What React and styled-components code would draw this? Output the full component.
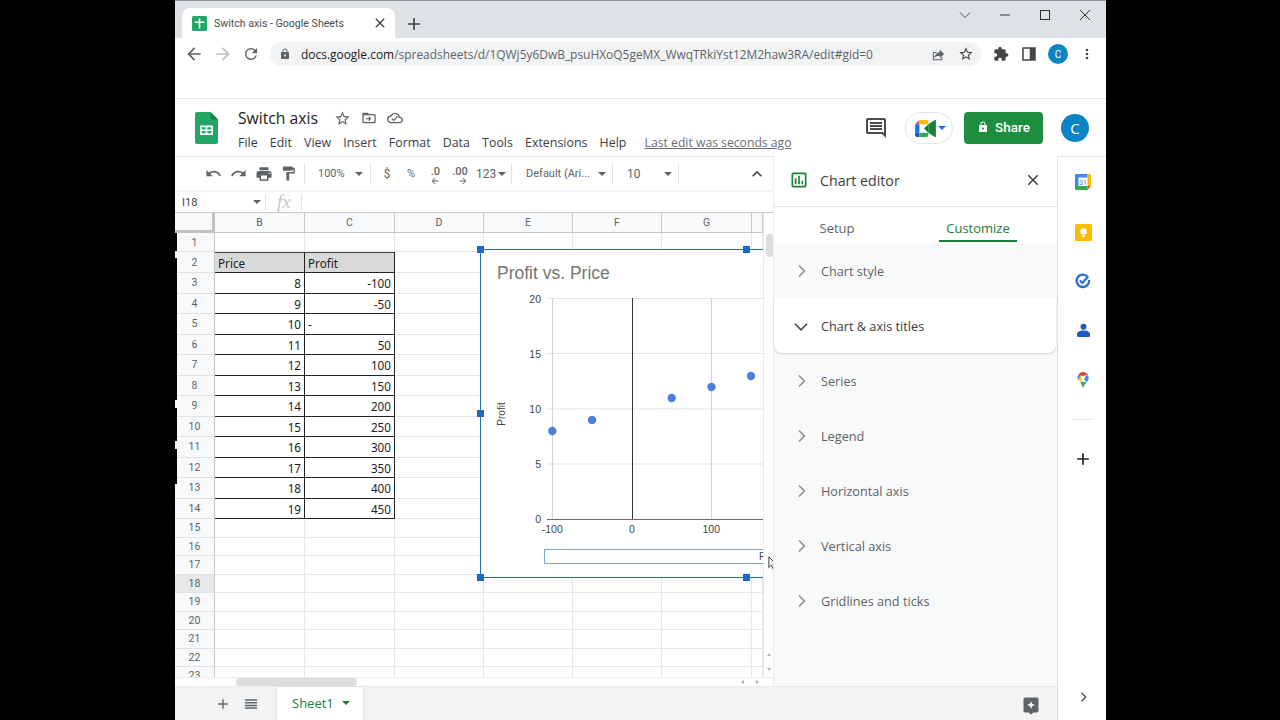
import React from 'react';
import styled, { createGlobalStyle } from 'styled-components';

const Global = createGlobalStyle`
  html, body { margin: 0; padding: 0; background: #000; }
  * { box-sizing: border-box; }
  #root { width: 1280px; height: 720px; overflow: hidden; }
`;

const Window = styled.div`
  position: relative; width: 931px; height: 720px; margin-left: 175px;
  background: #fff; display: flex; flex-direction: column;
  font-family: Roboto, "Noto Sans", sans-serif; overflow: hidden;
`;
const Glyph = styled.svg`
  display: block; flex: none; width: ${p => p.$w || p.$s || 24}px; height: ${p => p.$h || p.$s || 24}px;
  fill: ${p => p.$c || '#5f6368'};
`;
const Icon = ({ d, s, c }) => <Glyph viewBox="0 0 24 24" $s={s} $c={c}><path d={d} /></Glyph>;
const Caret = styled.span`
  display: block; flex: none; width: 0; height: 0; margin-left: ${p => p.$ml || 0}px;
  border-left: 4px solid transparent; border-right: 4px solid transparent;
  border-top: 4px solid ${p => p.$c || '#5f6368'};
`;

/* browser chrome */
const TabStrip = styled.div`
  height: 38px; flex: none; background: #dee1e6; border-top: 1px solid #8f9296;
  padding: 7px 0 0 7px; display: flex; align-items: stretch;
`;
const Tab = styled.div`
  width: 213px; background: #fff; border-radius: 8px 8px 0 0; display: flex; align-items: center;
  padding: 0 7px 0 10px; gap: 7px;
`;
const TabTitle = styled.span`
  flex: 1; font: 400 10.6px Roboto, sans-serif; color: #4a4d51; white-space: nowrap;
`;
const NewTab = styled.div`margin: 1px 0 0 9px; align-self: center;`;
const WinControls = styled.div`
  margin: -7px 0 0 auto; height: 28px; display: flex; align-items: center; gap: 26px; padding-right: 14px;
`;
const UrlRow = styled.div`height: 32px; flex: none; display: flex; align-items: center; padding-left: 9px;`;
const NavButtons = styled.div`display: flex; gap: 9px; align-items: center; margin-right: 10px;`;
const Omnibox = styled.div`
  width: 711px; height: 24px; border-radius: 12px; background: #f1f3f4; display: flex; align-items: center;
  padding: 0 7px 0 9px;
`;
const Url = styled.span`
  flex: 1; margin-left: 10px; font: 11.95px "Open Sans", sans-serif; color: #5f6368; white-space: nowrap;
  & b { font-weight: 400; color: #202124; }
`;
const OmniIcons = styled.div`display: flex; gap: 12px; align-items: center;`;
const ChromeTools = styled.div`display: flex; align-items: center; gap: 10.5px; margin-left: 12px;`;
const SmallAvatar = styled.div`
  width: 20px; height: 20px; border-radius: 50%; background: #0b84c6; color: #fff; font-size: 10px;
  display: flex; align-items: center; justify-content: center;
`;
const Bookmarks = styled.div`height: 29px; flex: none; border-bottom: 1px solid #e4e5e6;`;

/* docs header */
const DocsHeader = styled.header`
  height: 58px; flex: none; border-bottom: 1px solid #e0e2e4; display: flex; padding: 13px 17px 0 20px;
`;
const TitleCol = styled.div`margin: -7px 0 0 20px;`;
const TitleRow = styled.div`height: 26px; display: flex; align-items: center;`;
const DocTitle = styled.span`font: 400 15.7px "Open Sans", sans-serif; color: #202124; margin-right: 16px;`;
const TitleIcons = styled.div`display: flex; gap: 10px; align-items: center;`;
const Menu = styled.nav`display: flex; align-items: center; height: 22px; gap: 12.2px; margin-top: 0;`;
const MenuItem = styled.span`font: 400 12.4px "Open Sans", sans-serif; color: #3c4043; white-space: nowrap;`;
const LastEdit = styled.span`
  font: 400 12.2px "Open Sans", sans-serif; color: #6b6f73; text-decoration: underline; margin-left: 6px; white-space: nowrap;
`;
const HeaderRight = styled.div`margin-left: auto; display: flex; align-items: center; height: 32px;`;
const MeetPill = styled.div`
  width: 48px; height: 32px; margin: 0 11px 0 17px; border: 1px solid #e3e5e7; border-radius: 16px;
  display: flex; align-items: center; padding-left: 9px; gap: 2px;
`;
const ShareButton = styled.div`
  width: 79px; height: 32px; border-radius: 4px; background: #1e8e3e; color: #fff; display: flex; align-items: center;
  justify-content: center; gap: 6px; font: 500 13.5px Roboto, sans-serif; padding-bottom: 2px;
`;
const Avatar = styled.div`
  width: 28px; height: 28px; margin-left: 18px; border-radius: 50%; background: #0b84c6; color: #fff;
  font: 400 15px "Open Sans", sans-serif; display: flex; align-items: center; justify-content: center;
`;

/* body */
const Body = styled.div`flex: 1; min-height: 0; display: flex;`;
const Workspace = styled.div`width: 882px; display: flex; flex-direction: column;`;
const Upper = styled.div`flex: 1; min-height: 0; display: flex;`;
const Sheet = styled.div`width: 598px; display: flex; flex-direction: column; min-height: 0;`;
const Toolbar = styled.div`
  height: 33px; flex: none; display: flex; align-items: center; padding-left: 26px; position: relative;
`;
const Slot = styled.div`
  width: ${p => p.$w}px; flex: none; display: flex; align-items: center; justify-content: ${p => p.$j || 'center'};
  padding-left: ${p => p.$pl || 0}px;
  font: 400 ${p => p.$f || 11}px Roboto, sans-serif; color: #5f6368;
`;
const Sep = styled.div`flex: none; width: 1px; height: 20px; background: #e0e2e4; margin-left: ${p => p.$l || 0}px;`;
const Decimal = styled.div`
  display: flex; flex-direction: column; align-items: flex-end; font: 500 11px/9px Roboto, sans-serif; color: #5f6368; margin-top: 5px;
`;
const ToolbarGap = styled.div`height: 2px; flex: none; background: #f1f3f4;`;
const FormulaBar = styled.div`
  height: 20px; flex: none; display: flex; align-items: center; background: #fff; padding-left: 7px;
`;
const CellName = styled.div`width: 84px; display: flex; align-items: center; justify-content: space-between; padding-right: 4px;
  font: 400 11px Roboto, sans-serif; color: #3c4043; border-right: 1px solid #e0e2e4; height: 16px; margin-right: 10px;`;
const Fx = styled.span`font: italic 400 19px "Liberation Serif", serif; color: #c4c7c9; width: 26px; border-right: 1px solid #e0e2e4; height: 16px; line-height: 15px; padding-left: 1px;`;
const GridArea = styled.div`flex: 1; min-height: 0; display: flex; position: relative; border-top: 1px solid #c7c9cb;`;
const GridClip = styled.div`width: 588px; position: relative; overflow: hidden;`;
const Row = styled.div`display: flex; height: ${p => p.$h}px;`;
const Corner = styled.div`width: 40px; flex: none; background: #f8f9fa; border-right: 3px solid #c0c2c4; border-bottom: 3px solid #c0c2c4;`;
const ColHead = styled.div`
  width: ${p => p.$w}px; flex: none; background: #f8f9fa; border-right: 1px solid #c8cacc; border-bottom: 1px solid #c4c6c8;
  display: flex; align-items: center; justify-content: center; font: 400 10.5px Roboto, sans-serif; color: #5f6368;
`;
const RowHead = styled.div`
  width: 40px; flex: none; background: ${p => p.$sel ? '#e6e8ea' : '#f8f9fa'}; border-right: 1px solid #c4c6c8; border-bottom: 1px solid #e0e2e4;
  display: flex; align-items: center; justify-content: center; font: 400 10.5px Roboto, sans-serif; color: #5f6368;
`;
const Cell = styled.div`
  width: ${p => p.$w}px; flex: none; display: flex; align-items: center; padding: 1px 3px 0;
  justify-content: ${p => p.$right ? 'flex-end' : 'flex-start'};
  background: ${p => p.$head ? '#d9d9d9' : '#fff'};
  font: 400 11.7px "Noto Sans", sans-serif; color: #1c1c1c;
  border-right: 1px solid ${p => p.$table ? '#222' : '#e6e8e8'};
  border-bottom: 1px solid ${p => p.$table ? '#222' : '#e6e8e8'};
`;
const HeadTopCell = styled(Cell)`border-top: 1px solid #444;`;
const EdgeMark = styled.div`
  position: absolute; left: 0; width: 2px; top: ${p => p.$t}px; height: ${p => p.$h}px; background: #000;
`;
const Chart = styled.div`
  position: absolute; left: 305px; top: 35.5px; width: 320px; height: 329.5px; background: #fff; border: 1.5px solid #2a6cbc;
`;
const ChartSvg = styled.svg`display: block; position: absolute; left: -1px; top: -1px; width: 283px; height: 329px;`;
const Handle = styled.span`
  position: absolute; width: 7px; height: 7px; background: #1c68c9; left: ${p => p.$x}px; top: ${p => p.$y}px;
`;
const VScroll = styled.div`
  width: 10px; flex: none; border-left: 1px solid #e8eaeb; background: #fff; display: flex; flex-direction: column; align-items: center;
  padding: 21px 0 4px;
`;
const Thumb = styled.div`width: 8px; height: 23px; border-radius: 4px; background: #dadcde; margin-left: 2px;`;
const ScrollArrow = styled.div`
  width: 0; height: 0; margin-top: ${p => p.$m || 0}px; border-left: 2.5px solid transparent; border-right: 2.5px solid transparent;
  ${p => p.$up ? 'border-bottom: 3px solid #b0b3b6;' : 'border-top: 3px solid #b0b3b6;'}
`;
const Cursor = styled.svg`position: absolute; left: 593px; top: 343px; width: 10px; height: 14px;`;
const HScroll = styled.div`
  height: 9px; flex: none; background: #fff; border-top: 1px solid #ebedee; display: flex; align-items: center; padding-left: 61px; position: relative;
`;
const HThumb = styled.div`width: 121px; height: 8px; border-radius: 4px; background: #dadcde;`;
const HArrows = styled.div`margin-left: auto; margin-right: 14px; display: flex; gap: 12px; align-items: center;`;
const HArrow = styled.div`
  width: 0; height: 0; border-top: 2.5px solid transparent; border-bottom: 2.5px solid transparent;
  ${p => p.$left ? 'border-right: 3px solid #a8abae;' : 'border-left: 3px solid #a8abae;'}
`;

/* editor */
const Editor = styled.aside`
  width: 284px; flex: none; display: flex; flex-direction: column; background: #f8fafa;
  border-left: 1px solid #eceeef; position: relative; margin-top: -1px;
`;
const EditorHead = styled.div`
  height: 51px; flex: none; background: #fff; border-bottom: 1px solid #e3e5e6; display: flex; align-items: center; padding: 0 15px 2px 15px;
`;
const EditorTitle = styled.span`flex: 1; margin-left: 11px; font: 400 14.2px "Open Sans", sans-serif; color: #3c4043;`;
const Tabs = styled.div`height: 37px; flex: none; background: #fff; display: flex; padding-left: 45px; position: relative;`;
const EditorTab = styled.div`
  font: 500 13px "Open Sans", sans-serif; color: ${p => p.$on ? '#1e7e3e' : '#5f6368'}; height: 35px;
  display: flex; align-items: center; justify-content: center; white-space: nowrap;
  width: ${p => p.$w}px; margin-left: ${p => p.$m || 0}px; border-bottom: 2px solid ${p => p.$on ? '#188038' : 'transparent'};
  padding-top: 9px;
`;
const Accordion = styled.div`flex: 1; min-height: 0; display: flex; flex-direction: column;`;
const Item = styled.div`
  height: ${p => p.$h}px; flex: none; display: flex; align-items: center; padding-left: ${p => p.$open ? 17 : 18}px; gap: ${p => p.$open ? 10 : 11}px;
  background: ${p => p.$open ? '#fff' : 'transparent'}; color: ${p => p.$open ? '#3c4043' : '#5f6368'};
  font: 500 12.7px "Open Sans", sans-serif;
  ${p => p.$open && 'border-radius: 0 0 8px 8px; box-shadow: 0 1px 2px rgba(60,64,67,.22); margin-right: 1px; position: relative;'}
`;

/* sheet tabs */
const SheetBar = styled.div`
  height: 34px; flex: none; background: #f1f3f4; display: flex; align-items: stretch; padding-right: 16px; border-top: 1px solid #e9ebec;
`;
const BarIcons = styled.div`display: flex; align-items: center; padding-left: 40px; gap: 12px; width: 102px;`;
const SheetTab = styled.div`
  width: 86px; background: #fff; display: flex; align-items: center; padding: 0 0 2px 15px; gap: 8px;
  font: 500 13px "Open Sans", sans-serif; color: #188038; box-shadow: 0 0 2px rgba(60,64,67,.25);
`;
const Explore = styled.div`margin-left: auto; align-self: center; margin-top: 2px;`;

/* side panel */
const SidePanel = styled.div`
  width: 49px; flex: none; border-left: 1px solid #e0e2e4; display: flex; flex-direction: column; align-items: center; padding: 17px 0 0 2px; position: relative;
`;
const SideSlot = styled.div`height: 49.6px; flex: none; display: flex; justify-content: center;`;
const SideRule = styled.div`width: 20px; height: 1px; background: #e0e2e4; margin: -3px 0 29px;`;
const SideChevron = styled.div`margin-top: auto; margin-bottom: 16px;`;

const P = {
  back: 'M20 11H7.83l5.59-5.59L12 4l-8 8 8 8 1.41-1.41L7.83 13H20v-2z',
  reload: 'M17.65 6.35A7.96 7.96 0 0 0 12 4a8 8 0 1 0 7.73 10h-2.08A6 6 0 1 1 12 6c1.66 0 3.14.69 4.22 1.78L13 11h7V4l-2.35 2.35z',
  forward: 'M12 4l-1.41 1.41L16.17 11H4v2h12.17l-5.58 5.59L12 20l8-8z',
  close: 'M19 6.41L17.59 5 12 10.59 6.41 5 5 6.41 10.59 12 5 17.59 6.41 19 12 13.41 17.59 19 19 17.59 13.41 12z',
  plus: 'M19 13h-6v6h-2v-6H5v-2h6V5h2v6h6v2z',
  lock: 'M18 8h-1V6c0-2.76-2.24-5-5-5S7 3.24 7 6v2H6c-1.1 0-2 .9-2 2v10c0 1.1.9 2 2 2h12c1.1 0 2-.9 2-2V10c0-1.1-.9-2-2-2zm-6 9c-1.1 0-2-.9-2-2s.9-2 2-2 2 .9 2 2-.9 2-2 2zm3.1-9H8.9V6c0-1.71 1.39-3.1 3.1-3.1 1.71 0 3.1 1.39 3.1 3.1v2z',
  star: 'M22 9.24l-7.19-.62L12 2 9.19 8.63 2 9.24l5.46 4.73L5.82 21 12 17.27 18.18 21l-1.63-7.03L22 9.24zM12 15.4l-3.76 2.27 1-4.28-3.32-2.88 4.38-.38L12 6.1l1.71 4.04 4.38.38-3.32 2.88 1 4.28L12 15.4z',
  ext: 'M20.5 11H19V7c0-1.1-.9-2-2-2h-4V3.5C13 2.12 11.88 1 10.5 1S8 2.12 8 3.5V5H4c-1.1 0-1.99.9-1.99 2v3.8H3.5c1.49 0 2.7 1.21 2.7 2.7s-1.21 2.7-2.7 2.7H2V20c0 1.1.9 2 2 2h3.8v-1.5c0-1.49 1.21-2.7 2.7-2.7 1.49 0 2.7 1.21 2.7 2.7V22H17c1.1 0 2-.9 2-2v-4h1.5c1.38 0 2.5-1.12 2.5-2.5S21.88 11 20.5 11z',
  panel: 'M3 3h18v18H3V3zm2 2v14h8V5H5z',
  dots: 'M12 8a2 2 0 1 0 0-4 2 2 0 0 0 0 4zm0 2a2 2 0 1 0 0 4 2 2 0 0 0 0-4zm0 6a2 2 0 1 0 0 4 2 2 0 0 0 0-4z',
  share: 'M14 8V4l7 7-7 7v-4.1c-3.9 0-6.8 1.2-9 4.1.7-4.4 3.2-8.6 9-10zM3 8h6v1.6H4.6v9.8h12V16H18v5H3V8z',
  undo: 'M12.5 8c-2.65 0-5.05.99-6.9 2.6L2 7v9h9l-3.62-3.62c1.39-1.16 3.16-1.88 5.12-1.88 3.54 0 6.55 2.31 7.6 5.5l2.37-.78C21.08 11.03 17.15 8 12.5 8z',
  redo: 'M18.4 10.6C16.55 8.99 14.15 8 11.5 8c-4.65 0-8.58 3.03-9.96 7.22L3.9 16c1.05-3.19 4.05-5.5 7.6-5.5 1.95 0 3.73.72 5.12 1.88L13 16h9V7l-3.6 3.6z',
  print: 'M19 8H5c-1.66 0-3 1.34-3 3v6h4v4h12v-4h4v-6c0-1.66-1.34-3-3-3zm-3 11H8v-5h8v5zm3-7c-.55 0-1-.45-1-1s.45-1 1-1 1 .45 1 1-.45 1-1 1zm-1-9H6v4h12V3z',
  paint: 'M18 4V3c0-.55-.45-1-1-1H5c-.55 0-1 .45-1 1v4c0 .55.45 1 1 1h12c.55 0 1-.45 1-1V6h1v4H9v11c0 .55.45 1 1 1h2c.55 0 1-.45 1-1v-9h8V4h-3z',
  comment: 'M20 4v13.17L18.83 16H4V4h16m0-2H4c-1.1 0-2 .9-2 2v12c0 1.1.9 2 2 2h14l4 4V4c0-1.1-.9-2-2-2zm-2 10H6v2h12v-2zm0-3H6v2h12V9zm0-3H6v2h12V6z',
  folder: 'M20 6h-8l-2-2H4c-1.1 0-2 .9-2 2v12c0 1.1.9 2 2 2h16c1.1 0 2-.9 2-2V8c0-1.1-.9-2-2-2zm0 12H4V8h16v10zM12 9.5l-1.1 1.1 1.6 1.6H7v1.6h5.5l-1.6 1.6L12 16.5l3.5-3.5z',
  cloud: 'M19.35 10.04A7.49 7.49 0 0 0 12 4a7.48 7.48 0 0 0-6.65 4.04A5.99 5.99 0 0 0 0 14c0 3.31 2.69 6 6 6h13c2.76 0 5-2.24 5-5 0-2.64-2.05-4.78-4.65-4.96zM19 18H6c-2.21 0-4-1.79-4-4 0-2.05 1.53-3.76 3.56-3.97l1.07-.11.5-.95A5.47 5.47 0 0 1 12 6c2.62 0 4.88 1.86 5.39 4.43l.3 1.5 1.53.11A2.98 2.98 0 0 1 22 15c0 1.65-1.35 3-3 3zm-9-1l-3.5-3.5 1.4-1.4 2.1 2.1 5.2-5.2 1.4 1.4z',
  chevUp: 'M12 8l-6 6 1.41 1.41L12 10.83l4.59 4.58L18 14z',
  chevRight: 'M8.59 5.41L15.17 12l-6.58 6.59L10 20l8-8-8-8z',
  chevDown: 'M5.41 8.59L12 15.17l6.59-6.58L20 10l-8 8-8-8z',
  lines: 'M3 5h18v2.2H3zm0 4h18v2.2H3zm0 4h18v2.2H3zm0 4h18v2.2H3z',
  chart: 'M19 3H5c-1.1 0-2 .9-2 2v14c0 1.1.9 2 2 2h14c1.1 0 2-.9 2-2V5c0-1.1-.9-2-2-2zm0 16H5V5h14v14zM7 10h2v7H7zm4-3h2v10h-2zm4 6h2v4h-2z',
  explore: 'M19 3H5c-1.1 0-2 .9-2 2v14c0 1.1.9 2 2 2h4l3 2.5 3-2.5h4c1.1 0 2-.9 2-2V5c0-1.1-.9-2-2-2zm-7 4.2l1.4 3.4 3.4 1.4-3.4 1.4-1.4 3.4-1.4-3.4L7.2 12l3.4-1.4z',
};

const Favicon = () => (
  <Glyph viewBox="0 0 15 15" $s={15} $c="#23a566">
    <rect width="15" height="15" rx="1.5" />
    <path fill="#fff" d="M6.700 2.500h1.600v3h4v1.600h-4v5.400H6.700V7.100h-4V5.500h4z" />
  </Glyph>
);
const SheetsLogo = () => (
  <Glyph viewBox="0 0 23 32" $w={23} $h={32}>
    <path fill="#23a566" d="M2 0h13.5L23 7.5V30a2 2 0 0 1-2 2H2a2 2 0 0 1-2-2V2a2 2 0 0 1 2-2z" />
    <path fill="#188038" d="M15.5 0v6a1.5 1.5 0 0 0 1.5 1.5h6z" />
    <path fill="#fff" d="M5 13.5h13V23H5zm1.7 1.7v2.2h4v-2.2zm5.6 0v2.2h4v-2.2zm-5.6 3.8v2.3h4V19zm5.6 0v2.3h4V19z" />
  </Glyph>
);
const MeetLogo = () => (
  <Glyph viewBox="0 0 22 18" $w={21} $h={17}>
    <path fill="#ea4335" d="M4.5 0 0 4.5h4.5z" />
    <path fill="#fbbc04" d="M4.5 0H12a2 2 0 0 1 2 2v2.5H4.5z" />
    <path fill="#1a73e8" d="M0 4.5h4.5v9H0z" />
    <path fill="#0f5fc7" d="M0 13.5h4.5V18H2a2 2 0 0 1-2-2z" />
    <path fill="#34a853" d="M4.5 13.5H14V16a2 2 0 0 1-2 2H4.5z" />
    <path fill="#188038" d="M14 4.5 21 0h1v18h-1l-7-4.5z" />
    <path fill="#00832d" d="M14 4.5V13.5L9.5 9z" />
  </Glyph>
);
const CalendarLogo = () => (
  <Glyph viewBox="0 0 16 16" $s={16} $c="#fff">
    <rect width="16" height="16" fill="#fff" />
    <path fill="#4285f4" d="M1 0h11v3.5H3.5V12H0V1a1 1 0 0 1 1-1z" />
    <path fill="#fbbc04" d="M12 0h3a1 1 0 0 1 1 1v11h-3.5V3.5H12z" />
    <path fill="#34a853" d="M0 12h12.5v4H1a1 1 0 0 1-1-1z" />
    <path fill="#ea4335" d="M12.5 12H16l-3.5 4z" />
    <text x="8" y="10.5" fontSize="7" fill="#4285f4" textAnchor="middle" fontFamily="Roboto">31</text>
  </Glyph>
);
const KeepLogo = () => (
  <Glyph viewBox="0 0 17 17" $s={17} $c="#fbbc04">
    <rect width="17" height="17" rx="1.5" />
    <circle cx="8.5" cy="7.5" r="3.3" fill="#fff" />
    <rect x="6.8" y="11.5" width="3.4" height="1.5" fill="#fff" />
  </Glyph>
);
const TasksLogo = () => (
  <Glyph viewBox="0 0 16 16" $s={16} $c="none">
    <path d="M12.6 3.8A6.2 6.2 0 1 0 14 7" stroke="#2a6fd6" strokeWidth="2.3" fill="none" />
    <path d="M4.8 7.5 7.3 10l6-6.5" stroke="#2a6fd6" strokeWidth="2.2" fill="none" />
  </Glyph>
);
const ContactsLogo = () => (
  <Glyph viewBox="0 0 14 16" $w={13} $h={15} $c="#1a5cc4">
    <circle cx="7" cy="4" r="3.2" />
    <path d="M0 12c0-2.6 3-3.9 7-3.9s7 1.3 7 3.9v1.4c0 1-.7 1.6-1.6 1.6H1.6C.7 15 0 14.4 0 13.4z" />
  </Glyph>
);
const MapsLogo = () => (
  <Glyph viewBox="0 0 12 17" $w={12} $h={16}>
    <path fill="#34a853" d="M3 10l3 7c1-2.6 2.4-4.3 3.8-6z" />
    <path fill="#fbbc04" d="M.7 8.2 3 10l3-3.7L3.3 4z" />
    <path fill="#4285f4" d="M6 6.3 9.8 11C11 9.5 12 8 12 6c0-1-.3-2-.8-2.8z" />
    <path fill="#ea4335" d="M6 0C4 0 2.4 1 1.4 2.3L3.3 4 6 4.2l5.2-1C10.200 1.200 8.300 0 6 0z" />
    <path fill="#4285f4" d="M1.400 2.300A6 6 0 0 0 .7 8.200L3.300 4z" />
    <circle cx="6" cy="6" r="2" fill="#fff" />
  </Glyph>
);

const columns = [90, 90, 89, 89, 89, 90, 11];
const letters = ['B', 'C', 'D', 'E', 'F', 'G', ''];
const tableRows = [
  [8, -100], [9, -50], [10, '-'], [11, 50], [12, 100], [13, 150],
  [14, 200], [15, 250], [16, 300], [17, 350], [18, 400], [19, 450],
];
const emptyRows = [15, 16, 17, 18, 19, 20, 21, 22, 23];
const BlankCells = ({ from }) => columns.slice(from).map((w, i) => <Cell key={i} $w={w} />);
const accordion = ['Chart style', 'Chart & axis titles', 'Series', 'Legend', 'Horizontal axis', 'Vertical axis', 'Gridlines and ticks'];
const menu = ['File', 'Edit', 'View', 'Insert', 'Format', 'Data', 'Tools', 'Extensions', 'Help'];

const gridY = [298.5, 353.5, 409, 464, 519];
const gridX = [552.3, 632, 711.3];
const dots = [[552.3, 431], [592, 420], [671.7, 398], [711.5, 387], [751, 376]];

const ChartDrawing = () => (
  <ChartSvg viewBox="480 249 283 329" fontFamily="'Liberation Sans', sans-serif">
    <text x="497" y="279" fontSize="17.5" fill="#757575">Profit vs. Price</text>
    {gridY.slice(0, 4).map(y => <line key={y} x1="547" x2="763" y1={y} y2={y} stroke="#e2e2e2" strokeWidth="1.2" />)}
    {[552.5, 711.5].map(x => <line key={x} x1={x} x2={x} y1="298" y2="519" stroke="#d2d2d2" />)}
    <line x1="632.5" x2="632.5" y1="298" y2="519" stroke="#333" />
    <line x1="547" x2="763" y1="519.500" y2="519.500" stroke="#6a6a6a" strokeWidth="1.2" />
    {[20, 15, 10, 5, 0].map((v, i) => <text key={v} x="541" y={gridY[i] + 4} fontSize="10.5" fill="#444" textAnchor="end">{v}</text>)}
    {[-100, 0, 100].map((v, i) => <text key={v} x={gridX[i]} y="533" fontSize="10.5" fill="#444" textAnchor="middle">{v}</text>)}
    <text transform="translate(505 414) rotate(-90)" fontSize="10" fill="#444" textAnchor="middle">Profit</text>
    {dots.map(([x, y]) => <circle key={x} cx={x} cy={y} r="4.2" fill="#4a7fdc" />)}
    <rect x="544.500" y="549.500" width="240" height="14" fill="#fff" stroke="#7ba5dc" />
    <text x="759" y="560" fontSize="10" fill="#444">F</text>
  </ChartSvg>
);

export default function App() {
  return (
    <Window>
      <Global />
      <TabStrip>
        <Tab>
          <Favicon />
          <TabTitle>Switch axis - Google Sheets</TabTitle>
          <Icon d={P.close} s={16} c="#3c4043" />
        </Tab>
        <NewTab><Icon d={P.plus} s={20} c="#3c4043" /></NewTab>
        <WinControls>
          <Glyph viewBox="0 0 14 14" $s={14} $c="none"><path d="M2 4.500 7 9.500l5-5" stroke="#555" fill="none" /></Glyph>
          <Glyph viewBox="0 0 14 14" $s={14} $c="none"><path d="M2 7h10" stroke="#333" fill="none" /></Glyph>
          <Glyph viewBox="0 0 14 14" $s={14} $c="none"><rect x="2.500" y="2.500" width="9" height="9" stroke="#333" fill="none" /></Glyph>
          <Glyph viewBox="0 0 14 14" $s={14} $c="none"><path d="M2 2l10 10M12 2 2 12" stroke="#333" fill="none" /></Glyph>
        </WinControls>
      </TabStrip>
      <UrlRow>
        <NavButtons>
          <Icon d={P.back} s={20} c="#5f6368" />
          <Icon d={P.forward} s={20} c="#bcc0c4" />
          <Icon d={P.reload} s={18} c="#5f6368" />
        </NavButtons>
        <Omnibox>
          <Icon d={P.lock} s={12} c="#5f6368" />
          <Url><b>docs.google.com</b>/spreadsheets/d/1QWj5y6DwB_psuHXoQ5geMX_WwqTRkiYst12M2haw3RA/edit#gid=0</Url>
          <OmniIcons>
            <Icon d={P.share} s={15} c="#5f6368" />
            <Icon d={P.star} s={16} c="#444" />
          </OmniIcons>
        </Omnibox>
        <ChromeTools>
          <Icon d={P.ext} s={16} c="#444" />
          <Icon d={P.panel} s={18} c="#444" />
          <SmallAvatar>C</SmallAvatar>
          <Icon d={P.dots} s={16} c="#444" />
        </ChromeTools>
      </UrlRow>
      <Bookmarks />
      <DocsHeader>
        <SheetsLogo />
        <TitleCol>
          <TitleRow>
            <DocTitle>Switch axis</DocTitle>
            <TitleIcons>
              <Icon d={P.star} s={17} />
              <Icon d={P.folder} s={16} />
              <Icon d={P.cloud} s={16} />
            </TitleIcons>
          </TitleRow>
          <Menu>
            {menu.map(m => <MenuItem key={m}>{m}</MenuItem>)}
            <LastEdit>Last edit was seconds ago</LastEdit>
          </Menu>
        </TitleCol>
        <HeaderRight>
          <Icon d={P.comment} s={24} c="#4a4d50" />
          <MeetPill>
            <MeetLogo />
            <Caret $c="#1a73e8" />
          </MeetPill>
          <ShareButton>
            <Icon d={P.lock} s={12} c="#fff" />
            Share
          </ShareButton>
          <Avatar>C</Avatar>
        </HeaderRight>
      </DocsHeader>
      <Body>
        <Workspace>
          <Upper>
            <Sheet>
              <Toolbar>
                <Slot $w={25}><Icon d={P.undo} s={17} /></Slot>
                <Slot $w={25}><Icon d={P.redo} s={17} /></Slot>
                <Slot $w={25}><Icon d={P.print} s={18} /></Slot>
                <Slot $w={25}><Icon d={P.paint} s={17} /></Slot>
                <Sep $l={3} />
                <Slot $w={65} $j="flex-start" $pl={13}><span>100%</span><Caret $ml={10} /></Slot>
                <Sep />
                <Slot $w={32} $f={12}>$</Slot>
                <Slot $w={16}>%</Slot>
                <Slot $w={32}><Decimal>.0<Icon d={P.back} s={10} /></Decimal></Slot>
                <Slot $w={18}><Decimal>.00<Icon d={P.forward} s={10} /></Decimal></Slot>
                <Slot $w={42} $f={12} $j="flex-start" $pl={7}><span>123</span><Caret $ml={2} /></Slot>
                <Sep />
                <Slot $w={100} $j="flex-start" $pl={14}><span>Default (Ari...</span><Caret $ml={8} /></Slot>
                <Sep />
                <Slot $w={65} $f={12} $j="flex-start" $pl={14}><span>10</span><Caret $ml={23} /></Slot>
                <Sep />
                <Slot $w={88} $j="flex-end"><Icon d={P.chevUp} s={20} c="#444" /></Slot>
              </Toolbar>
              <ToolbarGap />
              <FormulaBar>
                <CellName><span>I18</span><Caret /></CellName>
                <Fx>fx</Fx>
              </FormulaBar>
              <GridArea>
                <GridClip>
                  <Row $h={20}>
                    <Corner />
                    {columns.map((w, i) => <ColHead key={i} $w={w}>{letters[i]}</ColHead>)}
                  </Row>
                  <Row $h={19}>
                    <RowHead>1</RowHead>
                    <BlankCells from={0} />
                  </Row>
                  <Row $h={21}>
                    <RowHead>2</RowHead>
                    <HeadTopCell $w={90} $head $table>Price</HeadTopCell>
                    <HeadTopCell $w={90} $head $table>Profit</HeadTopCell>
                    <BlankCells from={2} />
                  </Row>
                  {tableRows.map(([a, b], i) => (
                    <Row $h={20.5} key={a}>
                      <RowHead>{i + 3}</RowHead>
                      <Cell $w={90} $table $right>{a}</Cell>
                      <Cell $w={90} $table $right={b !== '-'}>{b}</Cell>
                      <BlankCells from={2} />
                    </Row>
                  ))}
                  {emptyRows.map(n => (
                    <Row $h={18.5} key={n}>
                      <RowHead $sel={n === 18}>{n}</RowHead>
                      <BlankCells from={0} />
                    </Row>
                  ))}
                  <Chart>
                    <ChartDrawing />
                    <Handle $x={-4} $y={-4} />
                    <Handle $x={262} $y={-4} />
                    <Handle $x={-4} $y={160} />
                    <Handle $x={-4} $y={324} />
                    <Handle $x={262} $y={324} />
                  </Chart>
                  <EdgeMark $t={20} $h={18} />
                  <EdgeMark $t={45} $h={142} />
                  <EdgeMark $t={195} $h={33} />
                  <EdgeMark $t={236} $h={35} />
                </GridClip>
                <VScroll>
                  <Thumb />
                  <ScrollArrow $up $m={396} />
                  <ScrollArrow $m={12} />
                </VScroll>
                <Cursor viewBox="0 0 12 17">
                  <path d="M1 1v13l3-3 2.200 5 2-1-2.200-4.800H10z" fill="#fff" stroke="#111" strokeWidth="1" />
                </Cursor>
              </GridArea>
              <HScroll>
                <HThumb />
                <HArrows><HArrow $left /><HArrow /></HArrows>
              </HScroll>
            </Sheet>
            <Editor>
              <EditorHead>
                <Icon d={P.chart} s={20} c="#188038" />
                <EditorTitle>Chart editor</EditorTitle>
                <Icon d={P.close} s={18} c="#3c4043" />
              </EditorHead>
              <Tabs>
                <EditorTab $w={36}>Setup</EditorTab>
                <EditorTab $on $w={78} $m={84}>Customize</EditorTab>
              </Tabs>
              <Accordion>
                {accordion.map((t, i) => (
                  <Item key={t} $open={i === 1} $h={i === 0 ? 54 : 55}>
                    <Icon d={i === 1 ? P.chevDown : P.chevRight} s={i === 1 ? 20 : 18} c={i === 1 ? '#444' : '#8a8d90'} />
                    {t}
                  </Item>
                ))}
              </Accordion>
            </Editor>
          </Upper>
          <SheetBar>
            <BarIcons>
              <Icon d={P.plus} s={16} />
              <Icon d={P.lines} s={16} />
            </BarIcons>
            <SheetTab>Sheet1<Caret $c="#188038" /></SheetTab>
            <Explore><Icon d={P.explore} s={20} c="#5f6368" /></Explore>
          </SheetBar>
        </Workspace>
        <SidePanel>
          <SideSlot><CalendarLogo /></SideSlot>
          <SideSlot><KeepLogo /></SideSlot>
          <SideSlot><TasksLogo /></SideSlot>
          <SideSlot><ContactsLogo /></SideSlot>
          <SideSlot><MapsLogo /></SideSlot>
          <SideRule />
          <Icon d={P.plus} s={20} c="#202124" />
          <SideChevron><Icon d={P.chevRight} s={14} c="#444" /></SideChevron>
        </SidePanel>
      </Body>
    </Window>
  );
}
